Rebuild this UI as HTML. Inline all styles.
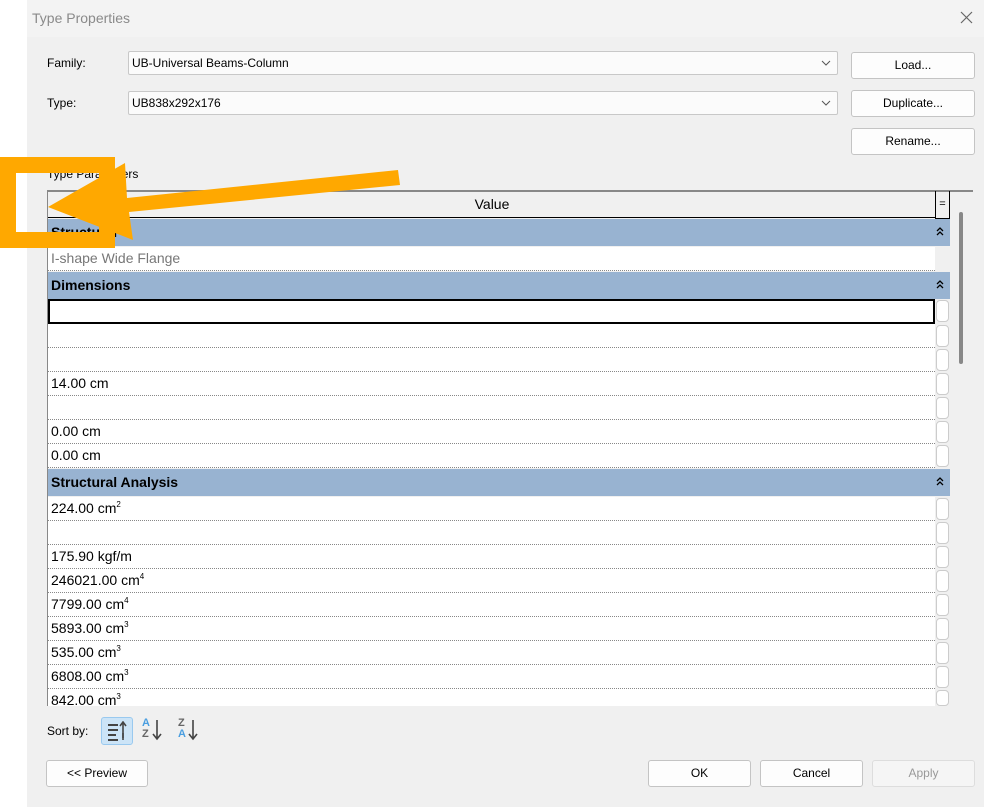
<!DOCTYPE html>
<html><head><style>
*{margin:0;padding:0;box-sizing:border-box}
body{width:984px;height:807px;background:#fff;font-family:"Liberation Sans",sans-serif;font-size:12px;color:#000;position:relative;overflow:hidden}
.dlg{position:absolute;left:27px;top:0;width:957px;height:807px;background:#f0f0f0}
.title{position:absolute;left:27px;top:0;width:957px;height:37px;background:#f3f3f3}
.a{position:absolute}
.combo{position:absolute;background:#fbfbfb;border:1px solid #c8c8c8;border-radius:2px;height:24px;padding:4px 3px;font-size:12px}
.btn{position:absolute;background:#fdfdfd;border:1px solid #c4c4c4;border-radius:3px;height:27px;text-align:center;line-height:25px;font-size:12px}
.row{position:absolute;left:48px;width:887px;background:#fff;border-bottom:1px dotted #888;font-size:14px;padding-left:3px;height:24px;line-height:23px}
.cb{position:absolute;left:936px;width:13px;height:22px;border:1px solid #ccc;border-radius:4px;background:#fff}
.grp{position:absolute;left:48px;width:902px;background:#98b3d1;font-weight:bold;font-size:14px;padding-left:3px;line-height:27px;height:27px}
.chev{position:absolute;right:6px;top:7px}
sup{font-size:8px;vertical-align:6px;line-height:0}
</style></head><body>
<div class="dlg"></div>
<div class="title"></div>
<div class="a" style="left:32px;top:10px;font-size:14px;color:#8a8a8a">Type Properties</div>
<svg class="a" style="left:960px;top:11px" width="13" height="13"><path d="M1 1L12 12M12 1L1 12" stroke="#666" stroke-width="1.2"/></svg>
<div class="a" style="left:47px;top:56px">Family:</div>
<div class="a" style="left:47px;top:96px">Type:</div>
<div class="combo" style="left:128px;top:51px;width:710px">UB-Universal Beams-Column<svg style="position:absolute;right:6px;top:8px" width="10" height="6"><path d="M1 1L5 5L9 1" stroke="#555" fill="none"/></svg></div>
<div class="combo" style="left:128px;top:91px;width:710px">UB838x292x176<svg style="position:absolute;right:6px;top:8px" width="10" height="6"><path d="M1 1L5 5L9 1" stroke="#555" fill="none"/></svg></div>
<div class="btn" style="left:851px;top:52px;width:124px">Load...</div>
<div class="btn" style="left:851px;top:90px;width:124px">Duplicate...</div>
<div class="btn" style="left:851px;top:128px;width:124px">Rename...</div>
<div class="a" style="left:47px;top:167px">Type Parameters</div>
<div class="a" style="left:47px;top:190px;width:926px;height:516px;background:#f0f0f0;border-top:2px solid #888;border-left:1px solid #888"></div>
<div class="a" style="left:48px;top:191px;width:888px;height:27px;border-bottom:1px solid #000;text-align:center;line-height:27px;font-size:14px">Value</div>
<div class="a" style="left:935px;top:191px;width:15px;height:28px;border:1px solid #000;border-top:none;text-align:center;line-height:27px;font-size:11px">=</div>
<div class="a" style="left:959px;top:212px;width:4px;height:152px;background:#888;border-radius:2px"></div>
<div class="grp" style="top:219px">Structural<svg class="chev" width="8" height="10"><path d="M1 5L4 2L7 5M1 9L4 6L7 9" stroke="#000" fill="none" stroke-width="1.3"/></svg></div>
<div class="row" style="top:247px;color:#777">I-shape Wide Flange</div>
<div class="grp" style="top:272px">Dimensions<svg class="chev" width="8" height="10"><path d="M1 5L4 2L7 5M1 9L4 6L7 9" stroke="#000" fill="none" stroke-width="1.3"/></svg></div>
<div class="row" style="top:299px;border:2px solid #000;height:25px"></div>
<div class="row" style="top:324px"></div>
<div class="row" style="top:348px"></div>
<div class="row" style="top:372px">14.00 cm</div>
<div class="row" style="top:396px"></div>
<div class="row" style="top:420px">0.00 cm</div>
<div class="row" style="top:444px">0.00 cm</div>
<div class="cb" style="top:300px"></div><div class="cb" style="top:325px"></div><div class="cb" style="top:349px"></div><div class="cb" style="top:373px"></div><div class="cb" style="top:397px"></div><div class="cb" style="top:421px"></div><div class="cb" style="top:445px"></div>
<div class="grp" style="top:469px">Structural Analysis<svg class="chev" width="8" height="10"><path d="M1 5L4 2L7 5M1 9L4 6L7 9" stroke="#000" fill="none" stroke-width="1.3"/></svg></div>
<div class="row" style="top:497px">224.00 cm<sup>2</sup></div>
<div class="row" style="top:521px"></div>
<div class="row" style="top:545px">175.90 kgf/m</div>
<div class="row" style="top:569px">246021.00 cm<sup>4</sup></div>
<div class="row" style="top:593px">7799.00 cm<sup>4</sup></div>
<div class="row" style="top:617px">5893.00 cm<sup>3</sup></div>
<div class="row" style="top:641px">535.00 cm<sup>3</sup></div>
<div class="row" style="top:665px">6808.00 cm<sup>3</sup></div>
<div class="row" style="top:689px;height:17px;border:none">842.00 cm<sup>3</sup></div>
<div class="cb" style="top:498px"></div><div class="cb" style="top:522px"></div><div class="cb" style="top:546px"></div><div class="cb" style="top:570px"></div><div class="cb" style="top:594px"></div><div class="cb" style="top:618px"></div><div class="cb" style="top:642px"></div><div class="cb" style="top:666px"></div><div class="cb" style="top:690px;height:16px"></div>
<div class="a" style="left:27px;top:706px;width:957px;height:101px;background:#f0f0f0"></div>
<div class="a" style="left:47px;top:724px">Sort by:</div>
<div class="a" style="left:101px;top:717px;width:32px;height:28px;background:#cce4f7;border:1px solid #99c9ef;border-radius:3px"></div>
<svg class="a" style="left:107px;top:721px" width="22" height="20"><path d="M1 4H11M1 9H11M1 14H9M1 19H11" stroke="#444" stroke-width="2"/><path d="M16 17V2M13 5L16 1L19 5" stroke="#444" stroke-width="1.6" fill="none"/><path d="M16 12V19" stroke="#444" stroke-width="1.6"/></svg>
<div class="a" style="left:142px;top:718px;font-size:11px;line-height:11px;font-weight:bold"><span style="color:#4a9ee0">A</span><br><span style="color:#666">Z</span></div>
<svg class="a" style="left:152px;top:719px" width="10" height="22"><path d="M5 1V19M1 15L5 20L9 15" stroke="#444" stroke-width="1.6" fill="none"/></svg>
<div class="a" style="left:178px;top:718px;font-size:11px;line-height:11px;font-weight:bold"><span style="color:#666">Z</span><br><span style="color:#4a9ee0">A</span></div>
<svg class="a" style="left:188px;top:719px" width="10" height="22"><path d="M5 1V19M1 15L5 20L9 15" stroke="#444" stroke-width="1.6" fill="none"/></svg>
<div class="btn" style="left:46px;top:760px;width:102px">&lt;&lt; Preview</div>
<div class="btn" style="left:648px;top:760px;width:103px">OK</div>
<div class="btn" style="left:760px;top:760px;width:103px">Cancel</div>
<div class="btn" style="left:872px;top:760px;width:103px;color:#999;background:#f5f5f5;border-color:#ddd">Apply</div>
<svg class="a" style="left:0;top:0" width="984" height="807">
<rect x="8" y="165" width="99" height="75" fill="none" stroke="#ffa800" stroke-width="16"/>
<polygon points="48,207 125,163 127,198 398,170 400,185 129,212 133,240" fill="#ffa800"/>
</svg>
</body></html>
